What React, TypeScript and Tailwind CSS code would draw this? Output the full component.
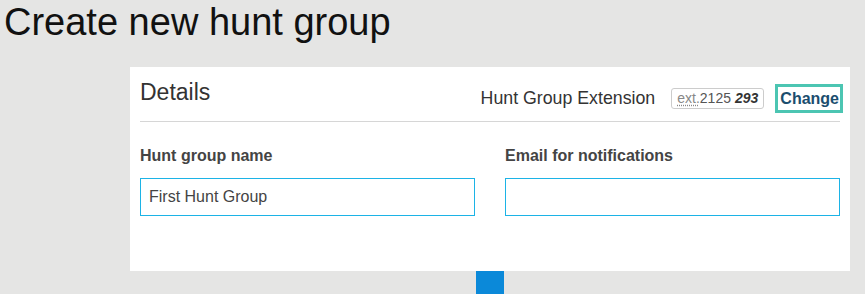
import { useState } from "react";

const fontStack = "font-['Liberation_Sans',Arial,sans-serif]";

function Field({
  label,
  value,
  onChange,
}: {
  label: string;
  value: string;
  onChange: (v: string) => void;
}) {
  return (
    <div className="flex flex-col">
      <label className="text-[16px] leading-[18px] font-bold text-[#444]">{label}</label>
      <input
        value={value}
        onChange={(e) => onChange(e.target.value)}
        className="mt-[13px] h-[38px] w-full border border-[#1cb3e6] bg-white px-[8px] text-[16px] text-[#444] outline-none"
      />
    </div>
  );
}

export default function App() {
  const [name, setName] = useState("First Hunt Group");
  const [email, setEmail] = useState("");

  return (
    <div className={`min-h-screen bg-[#e5e5e4] ${fontStack}`}>
      <h1 className="pl-[4px] text-[38px] leading-[44px] text-[#111]">Create new hunt group</h1>

      <div className="ml-[130px] mt-[23px] w-[720px]">
        <div className="bg-white px-[10px] pt-[10px] pb-[55px]">
          <div className="flex items-start justify-between border-b border-[#d6d6d6] pb-[8px]">
            <h2 className="mt-[1px] text-[23px] leading-[28px] text-[#333]">Details</h2>
            <div className="mt-[7px] -mr-[3px] flex items-center">
              <span className="text-[17.75px] text-[#333]">Hunt Group Extension</span>
              <span className="ml-[16px] flex h-[21px] items-center rounded-[3px] border border-[#ccc] px-[5px] text-[14px] text-[#555]">
                <span className="text-[#888] underline decoration-dotted underline-offset-2">ext.</span>
                <span>2125</span>
                <span className="ml-[4px] font-bold italic text-[#333]">293</span>
              </span>
              <button className="ml-[11px] h-[29px] border-[3px] border-[#4cc5b2] pl-[2px] pr-[1px] text-[16px] font-bold text-[#1b4d6e]">
                Change
              </button>
            </div>
          </div>

          <div className="mt-[25px] grid grid-cols-2 gap-x-[30px]">
            <Field label="Hunt group name" value={name} onChange={setName} />
            <Field label="Email for notifications" value={email} onChange={setEmail} />
          </div>
        </div>
        <div className="mx-auto h-[30px] w-[28px] bg-[#0b89d9]" />
      </div>
    </div>
  );
}
